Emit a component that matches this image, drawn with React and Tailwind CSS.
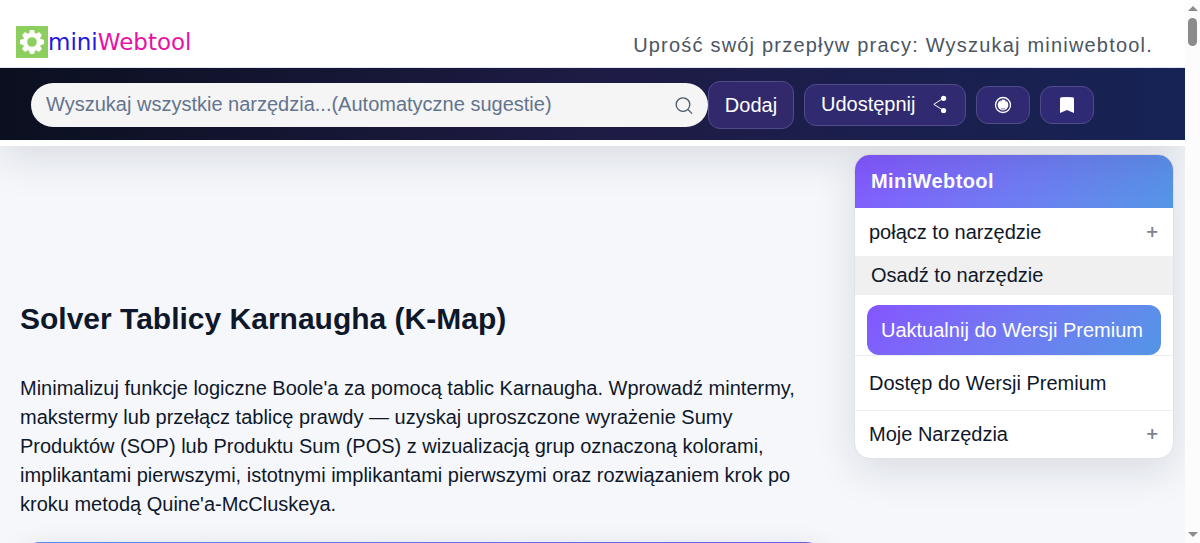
const SearchIcon = () => (
  <svg className="w-5 h-5" viewBox="0 0 20 20" fill="none" stroke="#475569" strokeWidth="1.3" aria-hidden="true">
    <circle cx="9" cy="9.6" r="6.8" />
    <path d="M13.8 14.4l4.2 4.2" />
  </svg>
)

const ShareIcon = () => (
  <svg className="w-5 h-5" viewBox="0 0 20 20" fill="#fff" aria-hidden="true">
    <path d="M14.600 4L4.8 10.300l9.800 6.200" fill="none" stroke="#fff" strokeWidth="1" />
    <circle cx="14.6" cy="4.3" r="2.6" />
    <circle cx="14.6" cy="16.5" r="2.6" />
  </svg>
)

const CoinIcon = () => (
  <svg className="w-[18px] h-[18px]" viewBox="0 0 18 18" aria-hidden="true">
    <circle cx="9" cy="9" r="7.5" fill="none" stroke="#fff" strokeWidth="1.3" />
    <circle cx="9" cy="9" r="5.4" fill="#fff" />
    <path d="M5.4 5.2q1.5-.8 2.6-.5M11 4.8l1.6.8M7 12.8h4" fill="none" stroke="#2f2a72" strokeWidth=".6" />
  </svg>
)

const BookmarkIcon = () => (
  <svg className="w-[18px] h-[18px]" viewBox="0 0 18 18" fill="#fff" aria-hidden="true">
    <path d="M2 2.6Q2 1.4 3.4 1.3q5.6-.6 11.2 0Q16 1.4 16 2.6V17l-7-3-7 3z" />
  </svg>
)

const Logo = () => (
  <a href="#" className="flex items-center font-['DejaVu_Sans',sans-serif] text-[23px] leading-8">
    <svg className="w-8 h-8" viewBox="0 0 32 32" aria-hidden="true">
      <rect width="32" height="32" fill="#8ccf5f" />
      <g fill="#fff">
        <circle cx="16" cy="16" r="9.2" />
        {[0, 45, 90, 135].map((angle) => (
          <path key={angle} d="M13.6 5l.7-1h3.4l.7 1 .8 4v14l-.8 4-.7 1h-3.4l-.7-1-.8-4V9z" transform={`rotate(${angle} 16 16)`} />
        ))}
      </g>
      <circle cx="16" cy="16" r="4.8" fill="#8ccf5f" />
    </svg>
    <span className="text-[#2318dd]">mini</span>
    <span className="text-[#e810a8]">Webtool</span>
  </a>
)

const Header = () => (
  <header className="relative z-10 bg-white pb-1.5 shadow-[0_12px_40px_rgba(15,23,42,0.12)]">
    <div className="flex justify-between items-end h-[68px] pl-4 pr-8 pb-[9px] border-b border-slate-200">
      <Logo />
      <p className="text-xl leading-[26px] tracking-[0.06em] text-[#4b5563]">Uprość swój przepływ pracy: Wyszukaj miniwebtool.</p>
    </div>
    <div className="flex items-center h-[72px] pt-0.5 pl-[31px] bg-linear-to-r from-[#0b1020] via-[#1e1b45] to-[#162355]">
      <form className="flex items-center w-[677px] h-11 pl-[15px] pr-3.5 rounded-full bg-[#f5f5f5]">
        <input
          type="search"
          aria-label="Wyszukaj wszystkie narzędzia"
          placeholder="Wyszukaj wszystkie narzędzia...(Automatyczne sugestie)"
          className="flex-1 min-w-0 h-11 pb-0.5 text-xl outline-none placeholder:text-slate-500"
        />
        <button type="button" aria-label="Szukaj"><SearchIcon /></button>
      </form>
      <div className="flex items-center gap-2.5 text-xl text-white">
        <button type="button" className="h-12 w-[86px] rounded-xl border border-[#514b8a] bg-[#32296d]">Dodaj</button>
        <button type="button" className="flex items-center justify-between h-[42px] w-[162px] px-4 pb-0.5 rounded-xl border border-[#514b8a] bg-[#302a70]">
          Udostępnij
          <ShareIcon />
        </button>
        <button type="button" aria-label="Monety" className="flex items-center justify-center h-[38px] w-[54px] rounded-xl border border-[#514b8a] bg-[#2f2a72]"><CoinIcon /></button>
        <button type="button" aria-label="Zakładki" className="flex items-center justify-center h-[38px] w-[54px] rounded-xl border border-[#514b8a] bg-[#2f2a74]"><BookmarkIcon /></button>
      </div>
    </div>
  </header>
)

const Article = () => (
  <article className="flex-1 min-w-0 pt-[152px]">
    <h1 className="text-3xl leading-[42px] font-bold">Solver Tablicy Karnaugha (K-Map)</h1>
    <p className="mt-[34px] pr-5 text-xl leading-[29px]">
      Minimalizuj funkcje logiczne Boole'a za pomocą tablic Karnaugha. Wprowadź mintermy, makstermy lub
      przełącz tablicę prawdy — uzyskaj uproszczone wyrażenie Sumy Produktów (SOP) lub Produktu Sum (POS) z
      wizualizacją grup oznaczoną kolorami, implikantami pierwszymi, istotnymi implikantami pierwszymi oraz
      rozwiązaniem krok po kroku metodą Quine'a-McCluskeya.
    </p>
    <div className="mt-[23px] h-96 rounded-[20px] bg-linear-to-r from-[#4a90e2] to-[#6c5ce0] shadow-[0_10px_30px_rgba(15,23,42,0.15)]" />
  </article>
)

const Plus = () => <span className="font-['DejaVu_Sans',sans-serif] text-base font-bold text-[#7d8390]">+</span>

const Sidebar = () => (
  <nav className="w-80 shrink-0 self-start mt-2 overflow-hidden rounded-2xl border border-[#e0e2e8] bg-white text-xl shadow-[0_12px_40px_rgba(15,23,42,0.12)]">
    <h2 className="h-[53px] px-4 leading-[53px] font-bold tracking-[0.02em] text-white bg-linear-135 from-[#8455ff] to-[#5296e6]">MiniWebtool</h2>
    <a href="#" className="flex items-center justify-between h-12 px-3.5">
      połącz to narzędzie
      <Plus />
    </a>
    <a href="#" className="flex items-center h-[39px] px-4 pb-0.5 bg-[#f0f0f0]">Osadź to narzędzie</a>
    <div className="px-3 pt-2.5">
      <a href="#" className="flex items-center h-[50px] px-3.5 rounded-xl text-white whitespace-nowrap bg-linear-135 from-[#8455ff] to-[#5296e6]">Uaktualnij do Wersji Premium</a>
    </div>
    <a href="#" className="flex items-center h-[55px] px-3.5 border-t border-[#ededf0]">Dostęp do Wersji Premium</a>
    <a href="#" className="flex items-center justify-between h-12 px-3.5 pb-0.5 border-t border-[#ededf0]">
      Moje Narzędzia
      <Plus />
    </a>
  </nav>
)

const Scrollbar = () => (
  <div className="flex flex-col items-center w-[15px] h-screen shrink-0 py-1.5 bg-[#fcfcfc]" aria-hidden="true">
    <svg className="w-2.5 h-[5px]" viewBox="0 0 10 5" fill="#8b8b8b"><path d="M5 0l5 5H0z" /></svg>
    <div className="w-[9px] h-7 mt-[7px] rounded-full bg-[#8b8b8b]" />
    <svg className="w-2.5 h-[5px] mt-auto" viewBox="0 0 10 5" fill="#8b8b8b"><path d="M0 0h10L5 5z" /></svg>
  </div>
)

const App = () => {
  return (
    <div className="flex h-screen overflow-hidden font-['Liberation_Sans',Arial,sans-serif] text-[#0f172a] bg-[#f5f7fb]">
      <div className="flex-1 min-w-0 overflow-hidden">
        <Header />
        <main className="flex gap-7 pl-5 pr-[11px]">
          <Article />
          <Sidebar />
        </main>
      </div>
      <Scrollbar />
    </div>
  )
}

export default App
